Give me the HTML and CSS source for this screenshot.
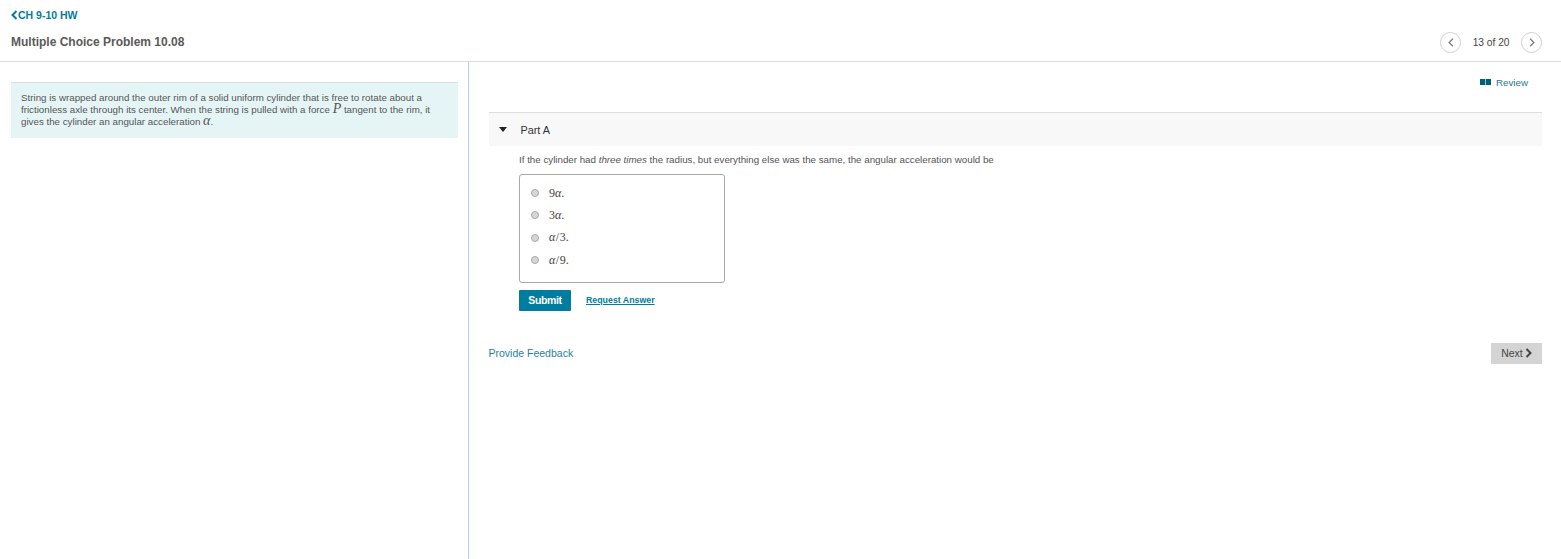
FILE: index.html
```html
<!DOCTYPE html>
<html lang="en">
<head>
    <meta charset="UTF-8">
    <title>Multiple Choice Problem 10.08</title>
    <link rel="stylesheet" href="styles.css">
</head>
<body>
    <header class="page-header">
        <a class="back-link" href="#">
            <svg class="back-icon" viewBox="0 0 7 10" width="7" height="10"><path d="M5.5 1 L1.5 5 L5.5 9" fill="none" stroke="#007c9e" stroke-width="2"/></svg>CH 9-10 HW
        </a>
        <div class="title-row">
            <h1 class="problem-title">Multiple Choice Problem 10.08</h1>
            <div class="pager">
                <span class="pager-btn">
                    <svg viewBox="0 0 8 12" width="6" height="9"><path d="M6.5 1 L1.5 6 L6.5 11" fill="none" stroke="#777" stroke-width="1.6"/></svg>
                </span>
                <span class="pager-count">13 of 20</span>
                <span class="pager-btn">
                    <svg viewBox="0 0 8 12" width="6" height="9"><path d="M1.5 1 L6.5 6 L1.5 11" fill="none" stroke="#777" stroke-width="1.6"/></svg>
                </span>
            </div>
        </div>
    </header>

    <main class="panes">
        <section class="left-pane">
            <div class="intro">
                String is wrapped around the outer rim of a solid uniform cylinder that is free to rotate about a<br>
                frictionless axle through its center. When the string is pulled with a force <span class="math-big">P</span> tangent to the rim, it<br>
                gives the cylinder an angular acceleration <span class="math-big">α</span>.
            </div>
        </section>

        <section class="right-pane">
            <div class="review-row">
                <a class="review-link" href="#">
                    <svg viewBox="0 0 11 6" width="11" height="6"><path d="M0 0 H5.2 V6 H0 Z M5.8 0 H11 V6 H5.8 Z" fill="#005f79"/></svg>
                    Review
                </a>
            </div>

            <div class="part-bar">
                <span class="part-caret"></span>
                <span class="part-name">Part A</span>
            </div>

            <div class="part-body">
                <p class="question">If the cylinder had <em>three times</em> the radius, but everything else was the same, the angular acceleration would be</p>

                <div class="choices">
                    <div class="choice"><span class="radio"></span><span class="math">9<i>α</i>.</span></div>
                    <div class="choice"><span class="radio"></span><span class="math">3<i>α</i>.</span></div>
                    <div class="choice"><span class="radio"></span><span class="math"><i>α</i><span class="slash">/</span>3.</span></div>
                    <div class="choice"><span class="radio"></span><span class="math"><i>α</i><span class="slash">/</span>9.</span></div>
                </div>

                <div class="actions">
                    <button class="submit-btn">Submit</button>
                    <a class="request-link" href="#">Request Answer</a>
                </div>
            </div>

            <div class="bottom-row">
                <a class="feedback-link" href="#">Provide Feedback</a>
                <button class="next-btn">Next
                    <svg viewBox="0 0 7 10" width="7" height="10"><path d="M1.5 1 L5.5 5 L1.5 9" fill="none" stroke="#444" stroke-width="2"/></svg>
                </button>
            </div>
        </section>
    </main>
</body>
</html>
```

FILE: styles.css
```css
*, *::before, *::after {
    box-sizing: border-box;
    margin: 0;
    padding: 0;
}
html, body {
    height: 100%;
}
body {
    font-family: "Liberation Sans", Arial, sans-serif;
    background-color: #fff;
    color: #444;
    display: flex;
    flex-direction: column;
    overflow: hidden;
}
a {
    color: #007c9e;
    text-decoration: none;
}

/* header */
.page-header {
    height: 62px;
    flex: none;
    border-bottom: 1px solid #dcdfe0;
    padding: 8px 19px 0 11px;
}
.back-link {
    display: flex;
    align-items: center;
    gap: 0;
    height: 13px;
    font-size: 10.5px;
    font-weight: bold;
}
.title-row {
    display: flex;
    align-items: center;
    justify-content: space-between;
    margin-top: 11px;
    height: 20px;
}
.problem-title {
    font-size: 12px;
    font-weight: bold;
    color: #5a5a5a;
}
.pager {
    display: flex;
    align-items: center;
    gap: 11.5px;
}
.pager-btn {
    width: 21px;
    height: 21px;
    border: 1px solid #cfcfcf;
    border-radius: 50%;
    display: flex;
    align-items: center;
    justify-content: center;
}
.pager-count {
    font-size: 10.2px;
    color: #444;
}

/* panes */
.panes {
    flex: 1;
    display: flex;
    min-height: 0;
}
.left-pane {
    flex: 0 0 469px;
    border-right: 1px solid #b5d0de;
    padding: 20px 10px 0 11px;
}
.intro {
    background-color: #e5f5f6;
    border-top: 1px solid #dcdfe0;
    height: 56px;
    padding: 9px 10px 0 10px;
    font-size: 9.75px;
    line-height: 12px;
    color: #555;
}
.math-big {
    font-family: "Liberation Serif", serif;
    font-style: italic;
    font-size: 14px;
    line-height: 10px;
}
.right-pane {
    flex: 1;
    padding: 0 19px 0 20px;
}
.review-row {
    display: flex;
    justify-content: flex-end;
    padding: 14px 14px 0 0;
    height: 50px;
}
.review-link {
    display: flex;
    align-items: center;
    gap: 5px;
    height: 12px;
    font-size: 9.8px;
    color: #2a7890;
}

/* part */
.part-bar {
    display: flex;
    align-items: center;
    height: 34px;
    background-color: #f8f8f8;
    border-top: 1px solid #dcdfe0;
    padding-left: 10px;
}
.part-caret {
    width: 0;
    height: 0;
    border-left: 4.5px solid transparent;
    border-right: 4.5px solid transparent;
    border-top: 5px solid #222;
    margin-right: 13px;
}
.part-name {
    font-size: 10.8px;
    color: #333;
    margin-left: 0.5px;
}
.part-body {
    padding-left: 30px;
}
.question {
    font-size: 9.75px;
    line-height: 12px;
    margin-top: 8px;
    color: #555;
}
.choices {
    width: 206px;
    height: 109px;
    margin-top: 8px;
    border: 1px solid #a8a8a8;
    border-radius: 3px;
    padding-top: 7px;
}
.choice {
    display: flex;
    align-items: center;
    height: 22.3px;
    padding-left: 11px;
}
.radio {
    width: 8px;
    height: 8px;
    border-radius: 50%;
    background-color: #d6d6d6;
    border: 1px solid #aaa;
    margin-right: 10px;
}
.math {
    font-family: "Liberation Serif", serif;
    font-size: 12px;
    color: #444;
}
.slash {
    padding: 0 0.5px;
}
.actions {
    display: flex;
    align-items: center;
    gap: 15px;
    margin-top: 7px;
}
.submit-btn {
    width: 52px;
    height: 21px;
    background-color: #007c9e;
    color: #fff;
    border: none;
    border-radius: 1px;
    padding-bottom: 1px;
    font-family: inherit;
    font-size: 10.5px;
    font-weight: bold;
    letter-spacing: -0.35px;
}
.request-link {
    font-size: 8.8px;
    font-weight: bold;
    text-decoration: underline;
    margin-bottom: 1px;
}
.bottom-row {
    display: flex;
    justify-content: space-between;
    align-items: center;
    margin-top: 32px;
}
.feedback-link {
    font-size: 10.5px;
    color: #2a7f9e;
    margin-bottom: 2px;
    margin-left: -0.5px;
}
.next-btn {
    display: flex;
    align-items: center;
    justify-content: center;
    gap: 2px;
    width: 51px;
    height: 21px;
    background-color: #d4d4d4;
    border: none;
    padding-bottom: 1px;
    font-family: inherit;
    font-size: 10.4px;
    color: #444;
}
```
